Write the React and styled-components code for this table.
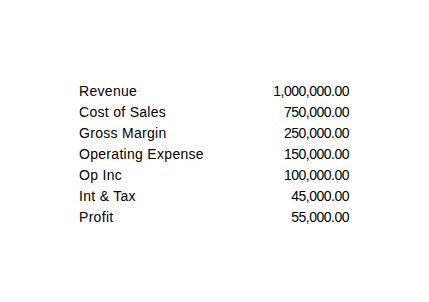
import React from 'react'
import styled, { createGlobalStyle } from 'styled-components'

const rows = [
  ['Revenue', '1,000,000.00'],
  ['Cost of Sales', '750,000.00'],
  ['Gross Margin', '250,000.00'],
  ['Operating Expense', '150,000.00'],
  ['Op Inc', '100,000.00'],
  ['Int & Tax', '45,000.00'],
  ['Profit', '55,000.00'],
]

const App = () => {
  return (
    <Page>
      <GlobalStyle />
      <Sheet>
        {rows.map(([label, value]) => (
          <Row key={label}>
            <Label>{label}</Label>
            <Value>{value}</Value>
          </Row>
        ))}
      </Sheet>
    </Page>
  )
}

export default App

const GlobalStyle = createGlobalStyle`
  html, body {
    margin: 0;
    background: #ffffff;
  }
`

const Page = styled.div`
  width: 429px;
  height: 302px;
  padding: 80px 0 0 79px;
  box-sizing: border-box;
  font-family: 'Liberation Sans', Arial, sans-serif;
  font-size: 14px;
  color: #000000;
`

const Sheet = styled.div`
  display: flex;
  flex-direction: column;
  width: 270px;
`

const Row = styled.div`
  display: flex;
  justify-content: space-between;
  align-items: center;
  height: 21px;
`

const Label = styled.span`
  white-space: nowrap;
  letter-spacing: 0.3px;
`

const Value = styled.span`
  white-space: nowrap;
  text-align: right;
  letter-spacing: -0.5px;
`
